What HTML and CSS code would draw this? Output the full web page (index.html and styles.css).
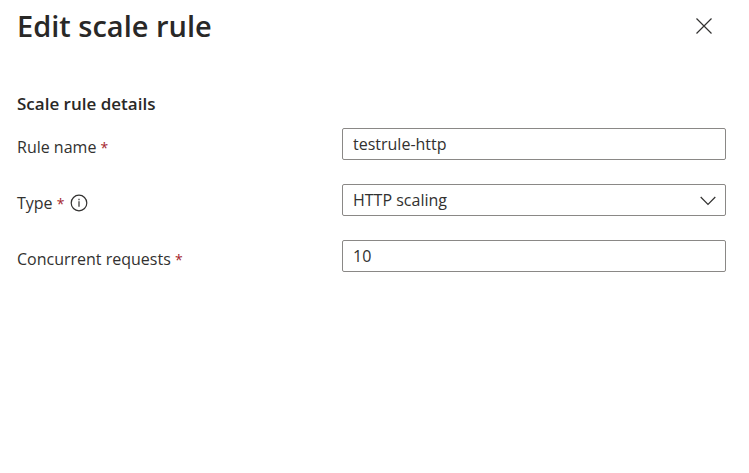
FILE: index.html
```html
<!DOCTYPE html>
<html lang="en">

<head>
    <meta charset="UTF-8">
    <meta name="viewport" content="width=device-width, initial-scale=1.0">
    <title>Edit scale rule</title>
    <link rel="stylesheet" href="styles.css">
</head>

<body>
    <header class="panel-header">
        <h1>Edit scale rule</h1>
        <button class="close" type="button" aria-label="Close">
            <svg width="16" height="16" viewBox="0 0 16 16">
                <path d="M0.5 0.5L15.5 15.5M15.5 0.5L0.5 15.5" />
            </svg>
        </button>
    </header>
    <form class="details">
        <h2>Scale rule details</h2>
        <div class="row">
            <label for="rule-name">Rule name <span class="required">*</span></label>
            <input id="rule-name" type="text" value="testrule-http" required>
        </div>
        <div class="row">
            <div class="label-group">
                <label for="type">Type <span class="required">*</span></label>
                <svg class="info" width="18" height="18" viewBox="0 0 18 18">
                    <circle cx="9" cy="9" r="7.8" />
                    <path d="M9 7.3V12.8M9 4.8V6.2" />
                </svg>
            </div>
            <div class="select">
                <select id="type">
                    <option>HTTP scaling</option>
                </select>
                <svg class="chevron" width="16" height="10" viewBox="0 0 16 10">
                    <path d="M0.7 1L8 8.3L15.3 1" />
                </svg>
            </div>
        </div>
        <div class="row">
            <label for="requests">Concurrent requests <span class="required">*</span></label>
            <input id="requests" type="text" inputmode="numeric" value="10" required>
        </div>
    </form>
</body>

</html>
```

FILE: styles.css
```css
body {
    margin: 0;
    padding: 4px 23px 24px 17px;
    background: #fff;
    color: #323130;
    font-family: "Segoe UI", "Open Sans", "Noto Sans", sans-serif;
    font-size: 16px;
    line-height: 24px;
}

h1,
h2 {
    margin: 0;
    color: #292827;
    font-weight: 600;
}

h1 {
    font-size: 29px;
    line-height: 44px;
}

h2 {
    margin-bottom: 12px;
    font-size: 17px;
}

.panel-header {
    display: flex;
    align-items: center;
    justify-content: space-between;
}

.close {
    display: flex;
    padding: 8px;
    margin-right: 6px;
    background: none;
    border: none;
}

svg {
    fill: none;
    stroke: #323130;
    stroke-width: 1.2;
}

.details {
    margin-top: 44px;
}

.row {
    display: grid;
    grid-template-columns: 325px 1fr;
    align-items: center;
    margin-bottom: 24px;
}

.row > label,
.label-group {
    padding-top: 6px;
}

.label-group {
    display: flex;
    align-items: center;
    gap: 6px;
}

.required {
    color: #a4262c;
    font-size: 14px;
}

input,
select {
    box-sizing: border-box;
    width: 100%;
    height: 32px;
    padding: 0 10px;
    background: #fff;
    border: 1px solid #8a8886;
    border-radius: 2px;
    color: #323130;
    font: inherit;
    appearance: none;
}

.select {
    position: relative;
    display: flex;
}

.chevron {
    position: absolute;
    top: 12px;
    right: 10px;
    pointer-events: none;
}
```
